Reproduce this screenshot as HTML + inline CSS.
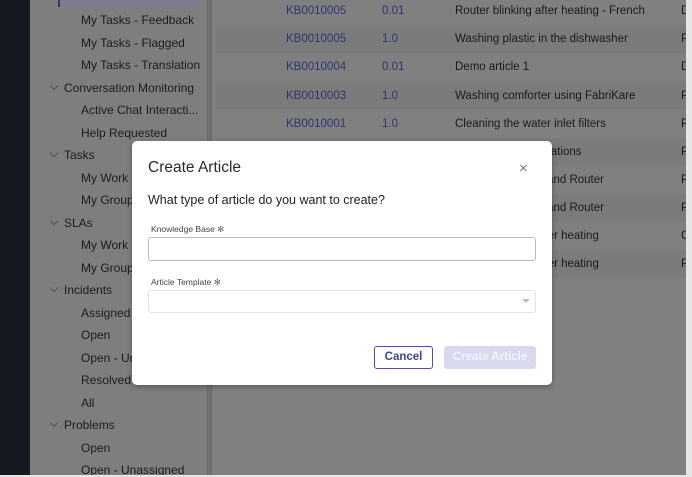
<!DOCTYPE html>
<html><head><meta charset="utf-8"><style>
*{margin:0;padding:0;box-sizing:border-box}
body{width:692px;height:477px;overflow:hidden;position:relative;background:#808080;font-family:"Liberation Sans",sans-serif;color:#1e1e1e}
.dark{position:absolute;left:0;top:0;width:30px;height:477px;background:#16191f}
.side{position:absolute;left:30px;top:0;width:178px;height:477px;background:#7e7e7e}
.div{position:absolute;left:207px;top:0;width:5px;height:477px;background:#737373;border-left:1px solid #6a6a6a;border-right:1px solid #6a6a6a}
.main{position:absolute;left:212px;top:0;width:474px;height:477px;background:#808080}
.scroll{position:absolute;left:686px;top:0;width:6px;height:477px;background:#e6e6e6}
.bot{position:absolute;left:0;top:475px;width:692px;height:2px;background:#e6e6e6}
.sel{position:absolute;left:58px;top:-10px;width:143px;height:17px;background:#7c7e8e;border-left:2px solid #2f3574}
.si{position:absolute;font-size:12px;white-space:nowrap;color:#1c1c1c}
.h{left:64px}.s{left:81px}
.chev{position:absolute;left:51px;width:6px;height:6px;border-right:1px solid #555;border-bottom:1px solid #555;transform:rotate(45deg)}
.row{position:absolute;left:216px;width:470px;height:28px}
.row.a{background:#7b7b7b}
.c{position:absolute;font-size:11.5px;white-space:nowrap}
.kb{left:286px;color:#2e3470}.v{left:382px;color:#2e3470}.t{left:455px;color:#1a1a1a}.l{left:681px;color:#1a1a1a}
.modal{position:absolute;left:132px;top:141px;width:420px;height:244px;background:#fff;border-radius:5px;box-shadow:0 2px 6px rgba(0,0,0,.3)}
.m{position:absolute;white-space:nowrap}
</style></head><body>
<div class="dark"></div><div class="side"></div><div class="div"></div><div class="main"></div>
<div class="row a" style="top:25px"></div><div class="row a" style="top:81px"></div><div class="row a" style="top:138px"></div><div class="row a" style="top:194px"></div><div class="row a" style="top:250px"></div>
<div class="sel"></div>
<div class="si s" style="top:13px">My Tasks - Feedback</div>
<div class="si s" style="top:36px">My Tasks - Flagged</div>
<div class="si s" style="top:58px">My Tasks - Translation</div>
<div class="chev" style="top:83px"></div><div class="si h" style="top:81px">Conversation Monitoring</div>
<div class="si s" style="top:103px">Active Chat Interacti...</div>
<div class="si s" style="top:126px">Help Requested</div>
<div class="chev" style="top:150px"></div><div class="si h" style="top:148px">Tasks</div>
<div class="si s" style="top:171px">My Work</div>
<div class="si s" style="top:193px">My Groups Work</div>
<div class="chev" style="top:218px"></div><div class="si h" style="top:216px">SLAs</div>
<div class="si s" style="top:238px">My Work</div>
<div class="si s" style="top:261px">My Groups Work</div>
<div class="chev" style="top:285px"></div><div class="si h" style="top:283px">Incidents</div>
<div class="si s" style="top:306px">Assigned to me</div>
<div class="si s" style="top:328px">Open</div>
<div class="si s" style="top:351px">Open - Unassigned</div>
<div class="si s" style="top:373px">Resolved</div>
<div class="si s" style="top:396px">All</div>
<div class="chev" style="top:420px"></div><div class="si h" style="top:418px">Problems</div>
<div class="si s" style="top:441px">Open</div>
<div class="si s" style="top:463px">Open - Unassigned</div>

<div class="c kb" style="top:5px">KB0010005</div><div class="c v" style="top:5px">0.01</div><div class="c t" style="top:5px">Router blinking after heating - French</div><div class="c l" style="top:5px">D</div>
<div class="c kb" style="top:33px">KB0010005</div><div class="c v" style="top:33px">1.0</div><div class="c t" style="top:33px">Washing plastic in the dishwasher</div><div class="c l" style="top:33px">P</div>
<div class="c kb" style="top:61px">KB0010004</div><div class="c v" style="top:61px">0.01</div><div class="c t" style="top:61px">Demo article 1</div><div class="c l" style="top:61px">D</div>
<div class="c kb" style="top:90px">KB0010003</div><div class="c v" style="top:90px">1.0</div><div class="c t" style="top:90px">Washing comforter using FabriKare</div><div class="c l" style="top:90px">P</div>
<div class="c kb" style="top:118px">KB0010001</div><div class="c v" style="top:118px">1.0</div><div class="c t" style="top:118px">Cleaning the water inlet filters</div><div class="c l" style="top:118px">P</div>
<div class="c t" style="top:146px">Smart home applications</div><div class="c l" style="top:146px">P</div>
<div class="c t" style="top:174px">Setting up Broadband Router</div><div class="c l" style="top:174px">P</div>
<div class="c t" style="top:202px">Setting up Broadband Router</div><div class="c l" style="top:202px">P</div>
<div class="c t" style="top:230px">Router blinking after heating</div><div class="c l" style="top:230px">C</div>
<div class="c t" style="top:258px">Router blinking after heating</div><div class="c l" style="top:258px">P</div>
<div class="scroll"></div><div class="bot"></div>

<div class="modal">
<div class="m" style="left:16px;top:18px;font-size:15.5px;color:#2b2b2b">Create Article</div>
<div class="m" style="left:387px;top:20px;font-size:15px;color:#777;line-height:15px">×</div>
<div class="m" style="left:16px;top:52px;font-size:12.5px;color:#222">What type of article do you want to create?</div>
<div class="m" style="left:19px;top:83px;font-size:8.5px;color:#444">Knowledge Base <span style="color:#666">✻</span></div>
<div class="m" style="left:16px;top:96px;width:388px;height:24px;border:1px solid #b9bcc4;border-radius:3px"></div>
<div class="m" style="left:19px;top:136px;font-size:8.5px;color:#444">Article Template <span style="color:#666">✻</span></div>
<div class="m" style="left:16px;top:149px;width:388px;height:23px;border:1px solid #e2e3e6;border-radius:3px"></div>
<div class="m" style="left:390px;top:158px;width:0;height:0;border-left:4px solid transparent;border-right:4px solid transparent;border-top:4px solid #bbb"></div>
<div class="m" style="left:242px;top:205px;width:59px;height:23px;border:1px solid #4d53a1;border-radius:3px;color:#3d4394;font-size:11.5px;font-weight:bold;text-align:center;line-height:21px">Cancel</div>
<div class="m" style="left:312px;top:205px;width:92px;height:23px;background:#d8d9ef;border-radius:3px;color:#f4f4fb;font-size:11.5px;font-weight:bold;text-align:center;line-height:23px">Create Article</div>
</div>
</body></html>
